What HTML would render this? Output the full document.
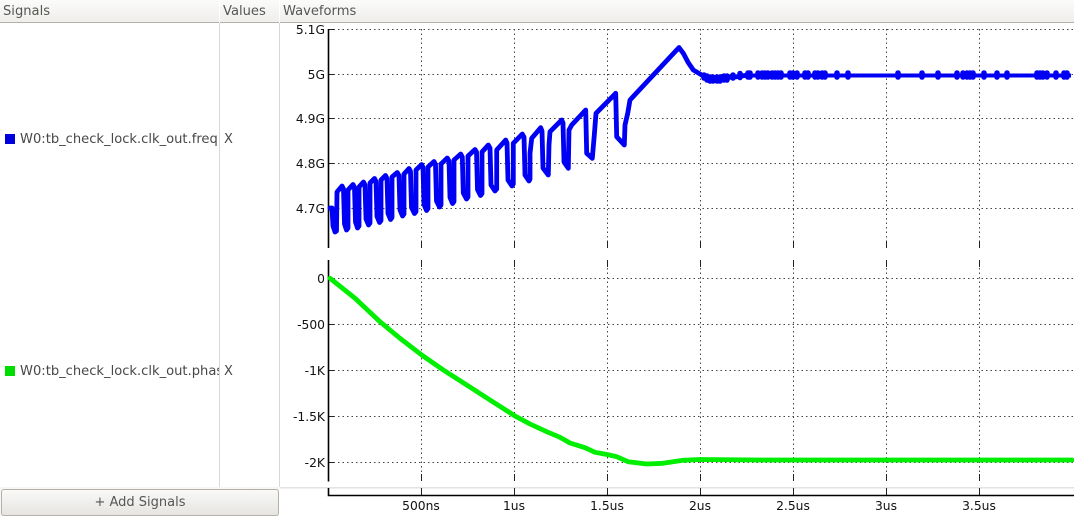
<!DOCTYPE html>
<html><head><meta charset="utf-8"><style>
html,body{margin:0;padding:0;background:#fff}
body{width:1074px;height:516px;overflow:hidden;position:relative;font-family:"DejaVu Sans",sans-serif}
.h{position:absolute;top:0;height:22px;line-height:24px;font-size:13.1px;color:#555753;background:linear-gradient(#fbfbfa,#efeeec);border-bottom:1px solid #b4afa7;box-sizing:content-box}
.h span{padding-left:3px}
.v{position:absolute;top:23px;width:1px;height:464px;background:#d8d8d8}
.l{position:absolute;left:20px;width:199px;overflow:hidden;white-space:nowrap;font-size:13.1px;color:#484848;line-height:16px}
.x{position:absolute;left:224px;font-size:13px;color:#484848;line-height:16px}
.s{position:absolute;left:5px;width:10px;height:10px}
.b{position:absolute;left:1px;top:489px;width:276px;height:25px;border:1px solid #b6b1a8;border-radius:3px;background:linear-gradient(#f9f9f8,#e6e5e2);text-align:center;font-size:13px;line-height:25px;color:#555753}
.f{position:absolute;left:0;top:487px;width:279px;height:29px;background:#f6f5f4}
svg{position:absolute;left:0;top:0}
svg text{font-family:"DejaVu Sans",sans-serif;font-size:12.3px;fill:#111}
</style></head><body>
<div class="h" style="left:0;width:219px"><span>Signals</span></div>
<div class="h" style="left:220px;width:59px"><span>Values</span></div>
<div class="h" style="left:280px;width:794px"><span>Waveforms</span></div>
<div class="v" style="left:219px"></div><div class="v" style="left:279px"></div>
<div class="s" style="top:134px;background:#0000dd"></div>
<div class="l" style="top:132px">W0:tb_check_lock.clk_out.freq</div><div class="x" style="top:132px">X</div>
<div class="s" style="top:366px;background:#00dd00"></div>
<div class="l" style="top:364px">W0:tb_check_lock.clk_out.phase</div><div class="x" style="top:364px">X</div>
<div class="f"></div>
<div class="b">+ Add Signals</div>
<svg width="1074" height="516" viewBox="0 0 1074 516">
<rect x="280" y="487" width="794" height="1.5" fill="#e2e2e2"/>
<g stroke="#444" stroke-width="1" stroke-dasharray="1.5 3" fill="none">
<path d="M329 29.5H1074M329 74.5H1074M329 118.5H1074M329 163.5H1074M329 208.5H1074"/>
<path d="M329 278.5H1074M329 324.5H1074M329 370.5H1074M329 416.5H1074M329 462.5H1074"/>
<path d="M421.5 29V241M514.5 29V241M607.5 29V241M700.5 29V241M793.5 29V241M886.5 29V241M979.5 29V241"/>
<path d="M421.5 268V474M514.5 268V474M607.5 268V474M700.5 268V474M793.5 268V474M886.5 268V474M979.5 268V474"/>
</g>
<g stroke="#222" stroke-width="1" fill="none">
<path d="M421.5 241V248M514.5 241V248M607.5 241V248M700.5 241V248M793.5 241V248M886.5 241V248M979.5 241V248"/>
<path d="M421.5 260V267M514.5 260V267M607.5 260V267M700.5 260V267M793.5 260V267M886.5 260V267M979.5 260V267"/>
<path d="M421.5 474V481M514.5 474V481M607.5 474V481M700.5 474V481M793.5 474V481M886.5 474V481M979.5 474V481"/>
<path d="M421.5 488V495M514.5 488V495M607.5 488V495M700.5 488V495M793.5 488V495M886.5 488V495M979.5 488V495"/>
<path d="M329 29.5H334M329 74.5H334M329 118.5H334M329 163.5H334M329 208.5H334M329 278.5H334M329 324.5H334M329 370.5H334M329 416.5H334M329 462.5H334"/>
</g>
<path d="M328.5 29V248M328.5 260V481.5M328.5 488V495.5H1074" stroke="#000" stroke-width="1.6" fill="none"/>
<g text-anchor="end">
<text x="325" y="34">5.1G</text><text x="325" y="79">5G</text><text x="325" y="123">4.9G</text><text x="325" y="168">4.8G</text><text x="325" y="213">4.7G</text>
<text x="325" y="283">0</text><text x="325" y="329">-500</text><text x="325" y="375">-1K</text><text x="325" y="421">-1.5K</text><text x="325" y="467">-2K</text>
</g>
<g text-anchor="middle">
<text x="421" y="510">500ns</text><text x="514" y="510">1us</text><text x="607" y="510">1.5us</text><text x="700" y="510">2us</text><text x="793" y="510">2.5us</text><text x="886" y="510">3us</text><text x="979" y="510">3.5us</text>
</g>
<path fill="none" stroke="#0000f4" stroke-width="4.8" stroke-linejoin="round" stroke-linecap="round" d="M330 208H332L333 226L335 232L336.5 231L337 192L342 186L343.5 189L344.5 224L346.5 230L348 228L348 190L353 184.5L354.5 187.5L355.5 222L357.5 228L359 226L359 187L363.5 182L365 185L366 219L368.5 225L370 223L370 183L374.5 178.5L376 181.5L377 216.5L379.5 222.5L381 220.5L381 180L385.5 175.5L387 178.5L388 213.5L390.5 219.5L392 217.5L392 177L397.3 172.5L399 175.5L400 210L402.5 216L404 214L404 174L409 168.5L410.5 171.5L411.5 207.5L414.5 213.5L416 211.5L416 170L421.7 164.5L423 167.5L424 204.5L426.5 210.5L428 208.5L428 167L434 161.5L435.5 164.5L436.5 201L439.5 207L441 205L441 164L447.3 158L449 161L450 197.5L452.5 203.5L454 201.5L454 160L460.7 154L462.3 157L463.3 193L466.5 199L468 197L468 156L475 149.5L476.5 152L477.5 189.5L480.5 195.5L482 193.5L482 152L488.3 145L490 148L491 185L495 191L496.7 189L496.7 150L505.7 140L507 143L508 180L512 186L513.3 184L513.3 143.3L522.3 134L524 137L525 175L529 181L530 179L530 153.3L531.7 138.3L540.7 127.7L542 131L543 168L548.3 175L549 145L550 131.7L561.7 120L563 123L564 162L568.3 168.3L569 130L571.7 125L585.7 110L586.7 153.3L592.3 158.3L594.3 135L596 113.3L615.7 93.3L616.7 136.7L624.3 145L625 125L627.7 113.3L630 100L679 47.5L683.3 53.3L688.3 62.7L693.3 70L701.7 75L707 78L712 80L717 78.5L722 80L727 77.5L735 77L745 75.5"/>
<path fill="none" stroke="#0000f4" stroke-width="4" d="M745 75.5H1071"/>
<path fill="none" stroke="#0000f4" stroke-width="5.5" stroke-linecap="round" d="M704 75V78M707 76V80M710 77V81M713 77V81M717 77V81M720 77V81M724 76V80M727 76V80M733 75V78M740 73.5V77.5M748 73V77M750 73V77M758 73V77M762 73V77M765 73V77M768 73V77M772 73V77M775 73V77M778 73V77M781 73V77M790 73V77M793 73V77M797 73V77M805 73V77M808 73V77M815 73V77M818 73V77M822 73V77M825 73V77M837 73V77M848 73V77M898 73V77M922 73V77M938 73V77M957 73V77M963 73V77M967 73V77M970 73V77M973 73V77M984 73V77M997 73V77M1007 73V77M1037 73V77M1040 73V77M1043 73V77M1047 73V77M1056 73V77M1064 73V77M1067 73V77"/>
<path fill="none" stroke="#00ee00" stroke-width="4.8" stroke-linejoin="round" stroke-linecap="round" d="M330 278.3L355 298.3L380 321.7L400 338.3L421.7 355L443.3 370L466.7 385L490 400L515 416L530 424L546.7 431.7L560 437.3L570 443L585 447.7L595 452.3L607 454.5L616.7 456.7L628 461.7L646.7 464L663 463.3L683 460.3L700 459.5L760 460H1072"/>
</svg>
</body></html>
